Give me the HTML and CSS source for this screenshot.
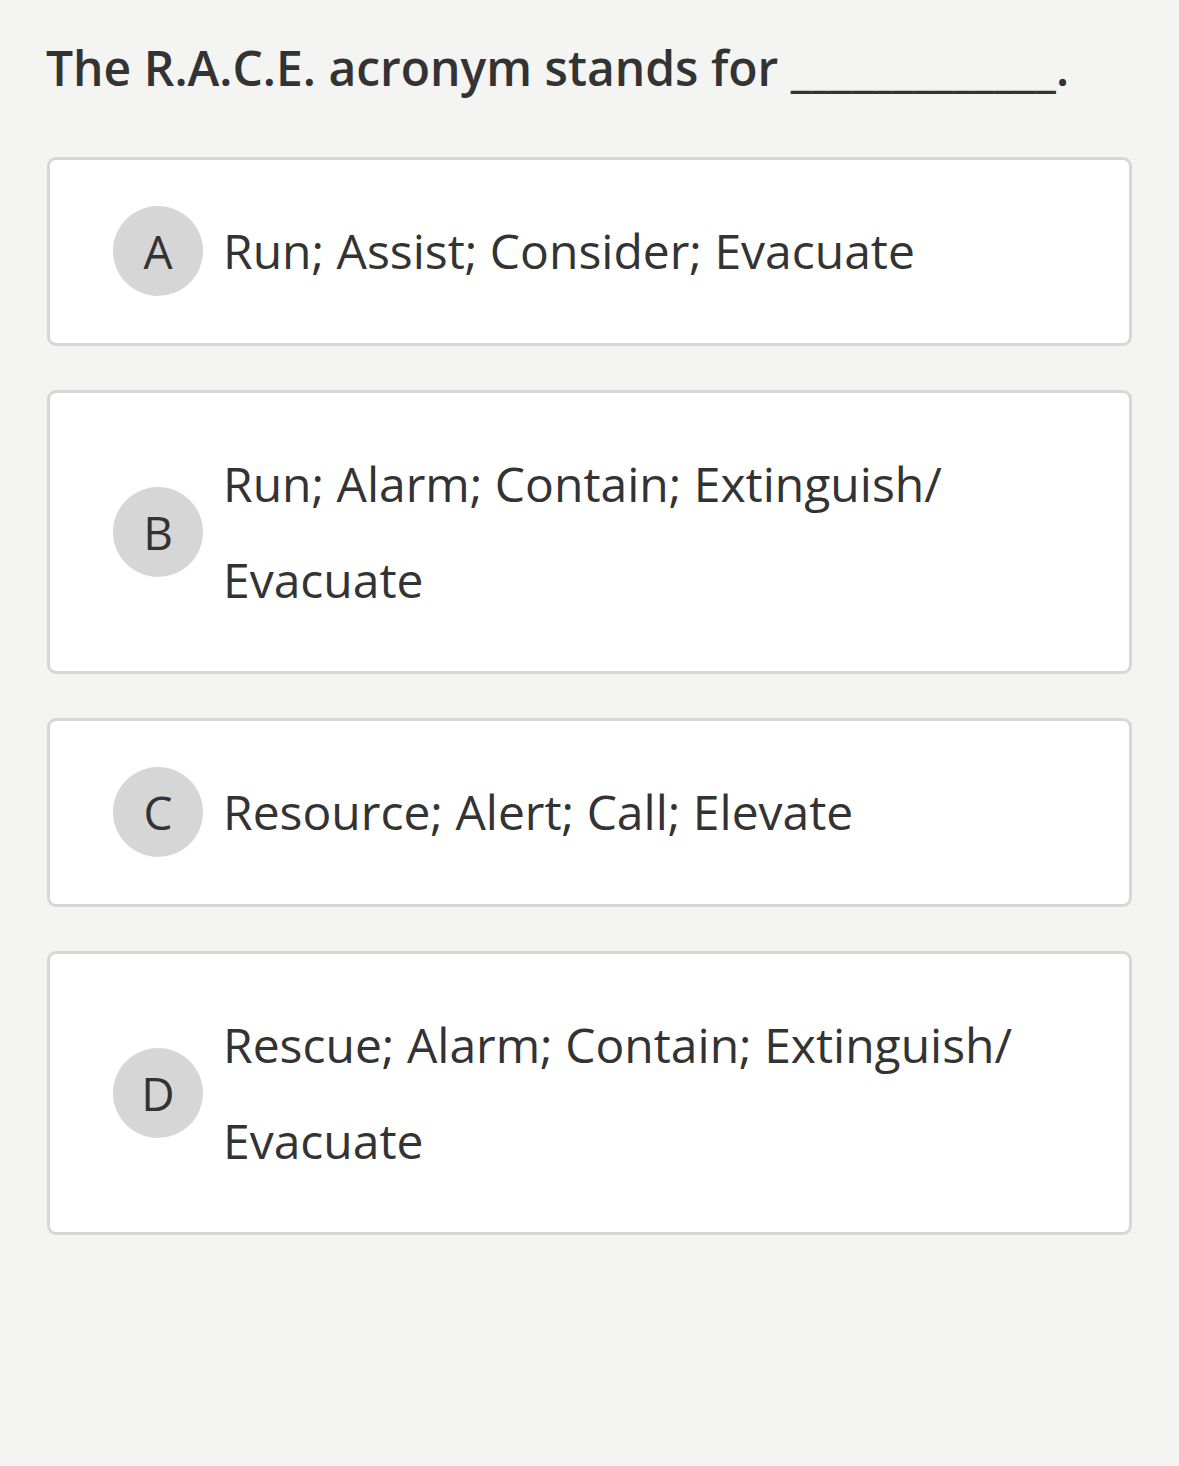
FILE: index.html
```html
<!DOCTYPE html>
<html>
<head>
<meta charset="utf-8">
<link rel="stylesheet" href="styles.css">
</head>
<body>
<main class="quiz">
  <h1 class="question">The R.A.C.E. acronym stands for _____________.</h1>
  <ul class="options">
    <li class="option"><span class="badge">A</span><span class="label">Run; Assist; Consider; Evacuate</span></li>
    <li class="option"><span class="badge">B</span><span class="label">Run; Alarm; Contain; Extinguish/<br>Evacuate</span></li>
    <li class="option"><span class="badge">C</span><span class="label">Resource; Alert; Call; Elevate</span></li>
    <li class="option"><span class="badge">D</span><span class="label">Rescue; Alarm; Contain; Extinguish/<br>Evacuate</span></li>
  </ul>
</main>
</body>
</html>
```
FILE: styles.css
```css
html, body {
  margin: 0;
  padding: 0;
  background: #f4f4f2;
}
body {
  font-family: "Open Sans", "Noto Sans", sans-serif;
  color: #333333;
}
.quiz {
  padding: 30px 47px 0 47px;
}
.question {
  margin: 0 0 0 -1px;
  font-size: 48px;
  font-weight: 600;
  line-height: 76px;
  letter-spacing: 0;
}
.options {
  list-style: none;
  margin: 51px 0 0 0;
  padding: 0;
  display: flex;
  flex-direction: column;
  gap: 44px;
}
.option {
  display: flex;
  align-items: center;
  background: #ffffff;
  border: 3px solid #d6d6d6;
  border-radius: 9px;
  padding: 43.25px 20px 43.25px 63px;
}
.badge {
  flex: 0 0 auto;
  width: 90px;
  height: 90px;
  border-radius: 50%;
  background: #d6d6d6;
  display: flex;
  align-items: center;
  justify-content: center;
  font-size: 46px;
  line-height: 1;
  color: #333333;
}
.label {
  margin-left: 20px;
  font-size: 48px;
  line-height: 96px;
}
```
